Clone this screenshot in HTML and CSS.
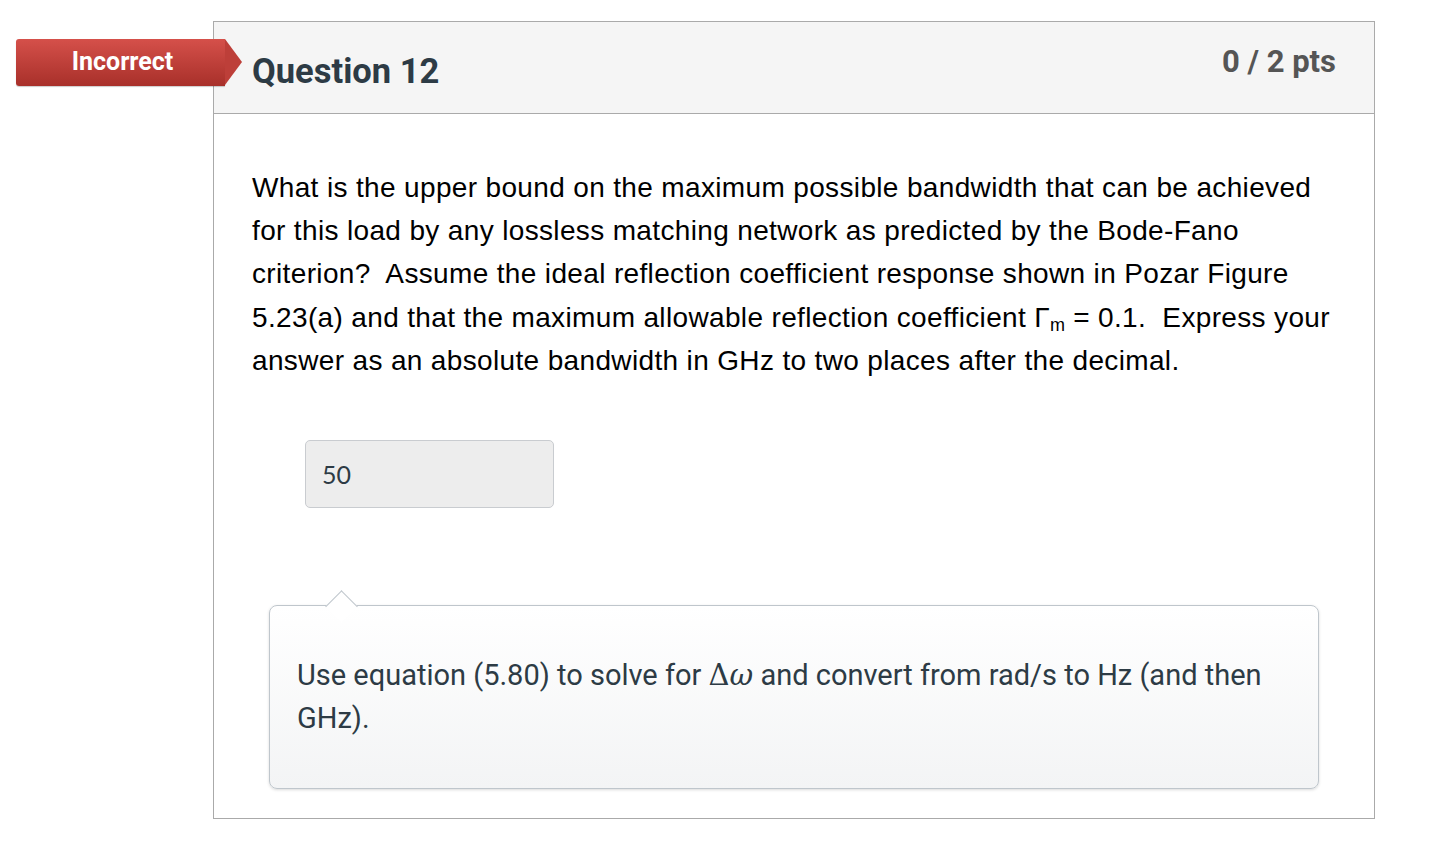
FILE: index.html
```html
<!DOCTYPE html>
<html>
<head>
<meta charset="utf-8">
<link rel="stylesheet" href="styles.css">
</head>
<body>
<div class="page">
  <div class="question">
    <div class="badge">Incorrect</div>
    <div class="header">
      <h2 class="title">Question 12</h2>
      <div class="pts">0 / 2 pts</div>
    </div>
    <div class="body">
      <p class="text">What is the upper bound on the maximum possible bandwidth that can be achieved for this load by any lossless matching network as predicted by the Bode-Fano criterion?&nbsp; Assume the ideal reflection coefficient response shown in Pozar Figure 5.23(a) and that the maximum allowable reflection coefficient Γ<sub>m</sub> = 0.1.&nbsp; Express your answer as an absolute bandwidth in GHz to two places after the decimal.</p>
      <div class="answer-row">
        <div class="answer">50</div>
      </div>
      <div class="comment">
        <p>Use equation (5.80) to solve for <span class="math"><span class="delta">Δ</span><i>ω</i></span> and convert from rad/s to Hz (and then GHz).</p>
      </div>
    </div>
  </div>
</div>
</body>
</html>
```
FILE: styles.css
```css
html, body {
  margin: 0;
  padding: 0;
  background: #fff;
}
.page {
  padding: 21px 0 0 213px;
}
.question {
  position: relative;
  width: 1160px;
  height: 796px;
  border: 1px solid #aaaaaa;
  box-sizing: content-box;
}
.badge {
  position: absolute;
  left: -198px;
  top: 17px;
  width: 209px;
  height: 47px;
  background: linear-gradient(#d5504a, #a8302a);
  border-radius: 3px 0 0 3px;
  color: #fff;
  font-family: Roboto, "Noto Sans", sans-serif;
  font-weight: 700;
  font-size: 25px;
  line-height: 46px;
  text-align: center;
  padding-left: 4px;
  box-sizing: border-box;
  box-shadow: 0 1px 1px rgba(0,0,0,0.2);
}
.badge::after {
  content: "";
  position: absolute;
  right: -17px;
  top: 0;
  width: 0;
  height: 0;
  border-top: 23.5px solid transparent;
  border-bottom: 23.5px solid transparent;
  border-left: 17px solid #bd3f39;
}
.header {
  display: flex;
  justify-content: space-between;
  align-items: flex-start;
  background: #f5f5f5;
  border-bottom: 1px solid #aaaaaa;
  height: 92px;
  padding: 0 38px 0 38px;
  box-sizing: border-box;
}
.title {
  margin: 29px 0 0 0;
  font-family: Roboto, "Noto Sans", sans-serif;
  font-weight: 700;
  font-size: 34.5px;
  line-height: 40px;
  color: #2d3b45;
}
.pts {
  margin-top: 22px;
  font-family: Roboto, "Noto Sans", sans-serif;
  font-weight: 700;
  font-size: 31px;
  line-height: 36px;
  color: #555555;
}
.body {
  padding: 52px 44px 0 38px;
}
.text {
  margin: 0;
  font-family: "Liberation Sans", Arial, sans-serif;
  font-size: 28px;
  letter-spacing: 0.35px;
  line-height: 43.2px;
  color: #000;
}
.text sub {
  font-size: 18px;
  letter-spacing: 0;
  vertical-align: -4px;
  line-height: 0;
}
.answer-row {
  padding: 58px 0 0 53px;
}
.answer {
  width: 249px;
  height: 68px;
  box-sizing: border-box;
  background: #ededed;
  border: 1px solid #c9ccd0;
  border-radius: 5px;
  font-family: Lato, "Open Sans", sans-serif;
  font-size: 25px;
  line-height: 66px;
  padding-left: 16px;
  color: #2d3b45;
}
.comment {
  position: relative;
  margin: 97px 0 0 17px;
  width: 1050px;
  height: 184px;
  box-sizing: border-box;
  border: 1px solid #bfc6cc;
  border-radius: 8px;
  background: linear-gradient(#ffffff, #f3f4f5);
  box-shadow: 0 1px 3px rgba(0,0,0,0.15);
  padding: 48px 27px 0 27px;
}
.comment::before {
  content: "";
  position: absolute;
  left: 60px;
  top: -11px;
  width: 22px;
  height: 22px;
  background: #fff;
  border-left: 1px solid #bfc6cc;
  border-top: 1px solid #bfc6cc;
  transform: rotate(45deg);
}
.comment p {
  margin: 0;
  font-family: Roboto, "Noto Sans", sans-serif;
  font-size: 29px;
  line-height: 43px;
  color: #2d3b45;
}
.math {
  font-family: "DejaVu Serif", "Liberation Serif", serif;
}
.delta {
  font-style: normal;
  font-size: 29px;
}
.math i {
  font-size: 29px;
}
```
